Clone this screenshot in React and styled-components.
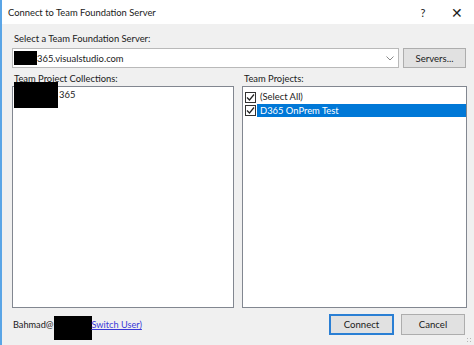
import React from "react";
import styled, { createGlobalStyle } from "styled-components";

const Global = createGlobalStyle`
  html, body { margin: 0; padding: 0; background: #f0f0f0; }
  body { font-family: Lato, "Noto Sans", sans-serif; font-size: 9.4px; color: #1a1a1a; }
`;

const Win = styled.div`
  width: 474px;
  height: 345px;
  box-sizing: border-box;
  border-left: 2px solid #5aa5e6;
  display: flex;
  flex-direction: column;
  background: #f0f0f0;
  overflow: hidden;
  position: relative;
`;

const TitleBar = styled.div`
  height: 24px;
  background: #fff;
  display: flex;
  align-items: center;
  padding-left: 6px;
  font-size: 9.4px;
`;

const Title = styled.div`
  flex: 1;
`;

const TitleBtn = styled.div`
  width: 34px;
  text-align: center;
  font-size: ${(p) => p.$size || 12}px;
  color: #222;
`;

const Body = styled.div`
  flex: 1;
  display: flex;
  flex-direction: column;
  padding: 7px 8px 0 10px;
`;

const Label = styled.div`
  height: 15px;
  line-height: 15px;
  padding-left: 2px;
  position: relative;
`;

const ServerRow = styled.div`
  display: flex;
  gap: 4px;
  margin-top: 2px;
  height: 20px;
`;

const Combo = styled.div`
  flex: 1;
  box-sizing: border-box;
  border: 1px solid #b9b9b9;
  background: #fff;
  display: flex;
  align-items: center;
  padding-left: 1px;
`;

const ComboText = styled.div`
  flex: 1;
  display: flex;
  align-items: center;
`;

const Chevron = styled.div`
  width: 16px;
  display: flex;
  justify-content: center;
`;

const Redact = styled.span`
  display: inline-block;
  flex: none;
  background: #000;
  width: ${(p) => p.$w}px;
  height: ${(p) => p.$h}px;
  margin-top: ${(p) => p.$mt || 0}px;
`;

const Button = styled.button`
  box-sizing: border-box;
  width: ${(p) => p.$w}px;
  height: ${(p) => p.$h || 20}px;
  background: #e1e1e1;
  border: 1px solid ${(p) => (p.$primary ? "#2a7fd4" : "#adadad")};
  box-shadow: ${(p) => (p.$primary ? "inset 0 0 0 1px #2a7fd4" : "none")};
  font-family: inherit;
  font-size: 9.6px;
  color: #1a1a1a;
  padding: 0;
`;

const Columns = styled.div`
  display: grid;
  grid-template-columns: 222px 225px;
  column-gap: 8px;
  margin-top: 3px;
`;

const ListBox = styled.div`
  box-sizing: border-box;
  height: 222px;
  background: #fff;
  border: 1px solid #828790;
  display: flex;
  flex-direction: column;
  padding-top: ${(p) => p.$pt || 0}px;
`;

const CollectionItem = styled.div`
  display: flex;
  align-items: center;
  height: 14px;
  padding-left: 1px;
  position: relative;
`;

const Overlay = styled.span`
  position: absolute;
  left: ${(p) => p.$x}px;
  top: ${(p) => p.$y}px;
  width: ${(p) => p.$w}px;
  height: ${(p) => p.$h}px;
  background: #000;
`;

const CheckRow = styled.div`
  display: flex;
  align-items: center;
  height: 12px;
  margin-bottom: ${(p) => p.$mb || 0}px;
  padding-left: 2px;
`;

const Box = styled.span`
  width: 11px;
  height: 11px;
  box-sizing: border-box;
  border: 1px solid #333;
  background: #fff;
  display: flex;
  align-items: center;
  justify-content: center;
  margin-right: 1px;
`;

const ItemText = styled.span`
  flex: 1;
  height: ${(p) => (p.$sel ? 13 : 12)}px;
  line-height: ${(p) => (p.$sel ? 13 : 12)}px;
  padding-left: 3px;
  background: ${(p) => (p.$sel ? "#0078d7" : "transparent")};
  color: ${(p) => (p.$sel ? "#fff" : "#1a1a1a")};
`;

const Footer = styled.div`
  display: flex;
  align-items: center;
  margin-top: 6px;
  height: 21px;
`;

const UserInfo = styled.div`
  flex: 1;
  display: flex;
  align-items: center;
  font-size: 9.2px;
  padding-left: 1px;
`;

const Link = styled.a`
  color: #3a3ad8;
  text-decoration: underline;
  font-size: 9.2px;
  cursor: pointer;
`;

const Buttons = styled.div`
  display: flex;
  gap: 7px;
  padding-right: 1px;
`;

const Grip = styled.div`
  position: absolute;
  right: 2px;
  bottom: 2px;
  width: 6px;
  height: 6px;
  background: radial-gradient(circle, #b5b5b5 0.8px, transparent 1px) 0 0 / 3px 3px;
`;

const Check = () => (
  <svg width="9" height="9" viewBox="0 0 9 9">
    <path d="M1 4.5 L3.5 7 L8 1.5" fill="none" stroke="#222" strokeWidth="1.2" />
  </svg>
);

export default function App() {
  return (
    <>
      <Global />
      <Win>
        <TitleBar>
          <Title>Connect to Team Foundation Server</Title>
          <TitleBtn $size={11}>?</TitleBtn>
          <TitleBtn $size={14}>✕</TitleBtn>
        </TitleBar>
        <Body>
          <Label>Select a Team Foundation Server:</Label>
          <ServerRow>
            <Combo>
              <ComboText>
                <Redact $w={23} $h={14} />
                365.visualstudio.com
              </ComboText>
              <Chevron>
                <svg width="8" height="5" viewBox="0 0 8 5">
                  <path d="M0.5 0.5 L4 4 L7.5 0.5" fill="none" stroke="#888" strokeWidth="1" />
                </svg>
              </Chevron>
            </Combo>
            <Button $w={63}>Servers...</Button>
          </ServerRow>
          <Columns>
            <Label>Team Project Collections:</Label>
            <Label>Team Projects:</Label>
            <ListBox>
              <CollectionItem>
                <Overlay $x={1} $y={-5} $w={44} $h={26} />
                <span style={{ paddingLeft: 45 }}>365</span>
              </CollectionItem>
            </ListBox>
            <ListBox $pt={4}>
              <CheckRow $mb={1}>
                <Box><Check /></Box>
                <ItemText>(Select All)</ItemText>
              </CheckRow>
              <CheckRow>
                <Box><Check /></Box>
                <ItemText $sel>D365 OnPrem Test</ItemText>
              </CheckRow>
            </ListBox>
          </Columns>
          <Footer>
            <UserInfo>
              Bahmad@
              <Redact $w={38} $h={24} $mt={6} />
              <Link>Switch User)</Link>
            </UserInfo>
            <Buttons>
              <Button $w={65} $h={21} $primary>Connect</Button>
              <Button $w={64} $h={21}>Cancel</Button>
            </Buttons>
          </Footer>
        </Body>
        <Grip />
      </Win>
    </>
  );
}
